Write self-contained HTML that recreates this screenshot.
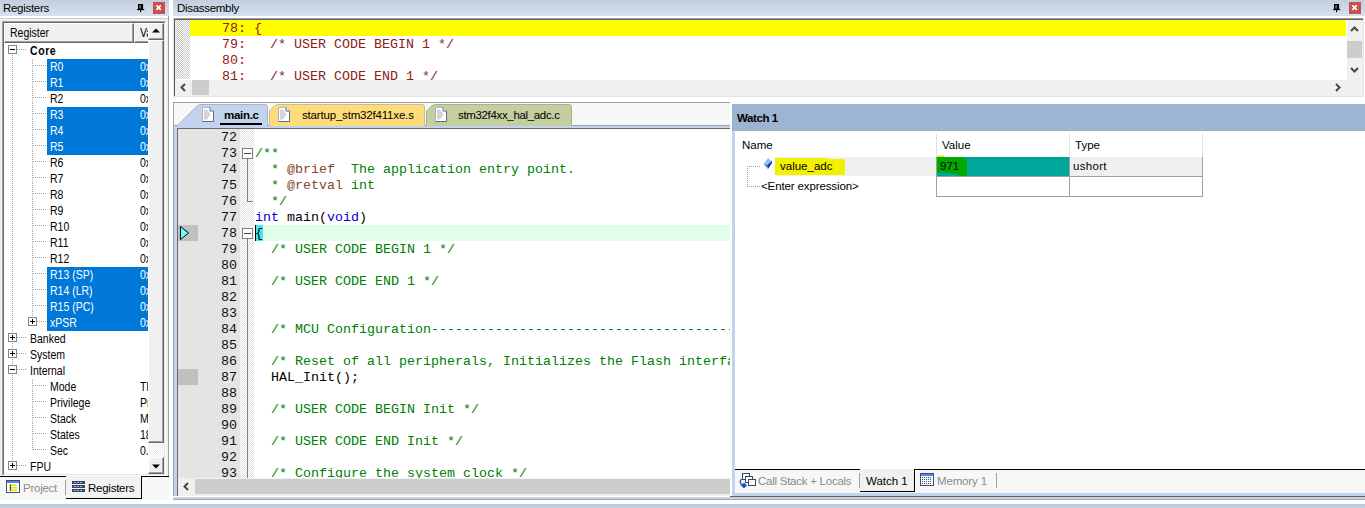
<!DOCTYPE html>
<html>
<head>
<meta charset="utf-8">
<title>Debug</title>
<style>
html,body{margin:0;padding:0;}
body{width:1365px;height:508px;position:relative;overflow:hidden;background:#fff;font-family:"Liberation Sans",sans-serif;font-size:12px;color:#000;}
.abs{position:absolute;}
div,span{box-sizing:border-box;}
.ui{font-family:"Liberation Sans",sans-serif;font-size:12px;white-space:pre;}
.mono{font-family:"Liberation Mono",monospace;font-size:13.333px;white-space:pre;line-height:16px;}
.titlebar{background:linear-gradient(#c2cedd,#d6e2f0);height:16px;}
.closebtn{background:#c75050;width:12px;height:12px;}
.dither{background-image:conic-gradient(#fff 25%,#c8c8c8 0 50%,#fff 0 75%,#c8c8c8 0);background-size:2px 2px;}
.row{position:absolute;left:0;height:16px;line-height:16px;white-space:pre;font-size:12.5px;transform:scaleX(0.84);transform-origin:0 0;}
.sel{position:absolute;left:47px;width:101px;height:16px;background:#0078d7;}
.dotv{position:absolute;width:1px;background-image:linear-gradient(#a0a0a0 50%,transparent 0);background-size:1px 2px;}
.doth{position:absolute;height:1px;background-image:linear-gradient(90deg,#a0a0a0 50%,transparent 0);background-size:2px 1px;}
.box{position:absolute;width:9px;height:9px;border:1px solid #848484;background:#fff;}
.box i{position:absolute;left:1px;top:3px;width:5px;height:1px;background:#000;}
.box b{position:absolute;left:3px;top:1px;width:1px;height:5px;background:#000;}
.ln{position:absolute;left:0;margin-top:1px;width:59px;text-align:right;color:#101010;}
.code{position:absolute;left:77px;margin-top:1px;}
.dither3{background-image:conic-gradient(#fff 25%,#ececec 0 50%,#fff 0 75%,#ececec 0);background-size:2px 2px;}
.dither2{background-image:conic-gradient(#fff 25%,#e4e4e4 0 50%,#fff 0 75%,#e4e4e4 0);background-size:2px 2px;}
.fbox{position:absolute;width:11px;height:11px;border:1px solid #808080;background:#fff;}
.fbox i{position:absolute;left:1px;top:4px;width:7px;height:1px;background:#404040;}
.g{color:#008000;}
.k{color:#0000e0;}
.d{color:#84492c;}
.dis{position:absolute;left:221px;color:#8b2500;}
</style>
</head>
<body>

<!-- ================= REGISTERS PANEL ================= -->
<div class="abs" style="left:0;top:0;width:169px;height:504px;background:#f0f0f0;border-right:1px solid #a0a0a0;"></div>
<div class="abs titlebar" style="left:0;top:0;width:169px;"></div>
<div class="abs ui" style="left:3px;top:1px;line-height:15px;font-size:11.5px;letter-spacing:-0.3px;">Registers</div>
<!-- pin -->
<svg class="abs" style="left:137px;top:4px;" width="8" height="9" viewBox="0 0 8 9"><path d="M1 0H6.100V5H1Z M2.600 1.200V4.500H3.500V1.200Z" fill="#000" fill-rule="evenodd"/><rect x="0" y="5" width="7.200" height="1.100" fill="#000"/><rect x="3" y="6" width="1.100" height="2.200" fill="#000"/></svg>
<div class="abs closebtn" style="left:153px;top:2px;"></div>
<svg class="abs" style="left:153px;top:2px;" width="13" height="13" viewBox="0 0 13 13"><path d="M3.400 3.400l4.400 4.400M7.800 3.400l-4.400 4.400" stroke="#fff" stroke-width="1.700" fill="none"/></svg>

<!-- list frame -->
<div class="abs" style="left:0;top:16px;width:168px;height:2px;background:#fff;"></div>
<div class="abs" style="left:0;top:18px;width:168px;height:1px;background:#cfcfcf;"></div>
<div class="abs" style="left:2px;top:21px;width:164px;height:455px;border:1px solid #a0a0a0;border-right-color:#fff;border-bottom-color:#fff;background:#fff;"></div>
<div class="abs" style="left:3px;top:22px;width:162px;height:453px;border:1px solid #696969;border-right-color:#e3e3e3;border-bottom-color:#e3e3e3;background:#fff;"></div>
<!-- header -->
<div class="abs" style="left:4px;top:23px;width:130px;height:20px;background:#f0f0f0;border:1px solid #fff;border-right-color:#696969;border-bottom-color:#696969;box-shadow:inset -1px -1px 0 #a0a0a0;"></div>
<div class="abs" style="left:134px;top:23px;width:30px;height:20px;background:#f0f0f0;border:1px solid #fff;border-right-color:#696969;border-bottom-color:#696969;box-shadow:inset -1px -1px 0 #a0a0a0;"></div>
<div class="abs ui" style="left:10px;top:25px;line-height:16px;font-size:12.5px;transform:scaleX(0.84);transform-origin:0 0;">Register</div>
<div class="abs ui" style="left:140px;top:25px;line-height:16px;width:8px;overflow:hidden;"><span style="display:inline-block;font-size:12.5px;transform:scaleX(0.84);transform-origin:0 0;">Va</span></div>

<!-- tree area -->
<div class="abs" id="tree" style="left:0;top:43px;width:148px;height:431px;overflow:hidden;">
  <!-- selections -->
  <div class="sel" style="top:16px;height:32px;"></div>
  <div class="sel" style="top:64px;height:48px;"></div>
  <div class="sel" style="top:224px;height:64px;"></div>
  <!-- dotted lines -->
  <div class="dotv" style="left:12px;top:12px;height:412px;"></div>
  <div class="dotv" style="left:32px;top:16px;height:264px;"></div>
  <div class="dotv" style="left:32px;top:336px;height:72px;"></div>
  <div class="doth" style="left:17px;top:6px;width:10px;"></div>
  <div class="box" style="left:8px;top:2px;"><i></i></div>
  <div class="row" style="left:30px;top:0px;color:#000;font-weight:bold;letter-spacing:0.7px;">Core</div>
  <div class="doth" style="left:33px;top:22px;width:14px;"></div>
  <div class="row" style="left:50px;top:16px;color:#fff;">R0</div>
  <div class="row" style="left:140px;top:16px;color:#fff;">0x</div>
  <div class="doth" style="left:33px;top:38px;width:14px;"></div>
  <div class="row" style="left:50px;top:32px;color:#fff;">R1</div>
  <div class="row" style="left:140px;top:32px;color:#fff;">0x</div>
  <div class="doth" style="left:33px;top:54px;width:14px;"></div>
  <div class="row" style="left:50px;top:48px;color:#000;">R2</div>
  <div class="row" style="left:140px;top:48px;color:#000;">0x</div>
  <div class="doth" style="left:33px;top:70px;width:14px;"></div>
  <div class="row" style="left:50px;top:64px;color:#fff;">R3</div>
  <div class="row" style="left:140px;top:64px;color:#fff;">0x</div>
  <div class="doth" style="left:33px;top:86px;width:14px;"></div>
  <div class="row" style="left:50px;top:80px;color:#fff;">R4</div>
  <div class="row" style="left:140px;top:80px;color:#fff;">0x</div>
  <div class="doth" style="left:33px;top:102px;width:14px;"></div>
  <div class="row" style="left:50px;top:96px;color:#fff;">R5</div>
  <div class="row" style="left:140px;top:96px;color:#fff;">0x</div>
  <div class="doth" style="left:33px;top:118px;width:14px;"></div>
  <div class="row" style="left:50px;top:112px;color:#000;">R6</div>
  <div class="row" style="left:140px;top:112px;color:#000;">0x</div>
  <div class="doth" style="left:33px;top:134px;width:14px;"></div>
  <div class="row" style="left:50px;top:128px;color:#000;">R7</div>
  <div class="row" style="left:140px;top:128px;color:#000;">0x</div>
  <div class="doth" style="left:33px;top:150px;width:14px;"></div>
  <div class="row" style="left:50px;top:144px;color:#000;">R8</div>
  <div class="row" style="left:140px;top:144px;color:#000;">0x</div>
  <div class="doth" style="left:33px;top:166px;width:14px;"></div>
  <div class="row" style="left:50px;top:160px;color:#000;">R9</div>
  <div class="row" style="left:140px;top:160px;color:#000;">0x</div>
  <div class="doth" style="left:33px;top:182px;width:14px;"></div>
  <div class="row" style="left:50px;top:176px;color:#000;">R10</div>
  <div class="row" style="left:140px;top:176px;color:#000;">0x</div>
  <div class="doth" style="left:33px;top:198px;width:14px;"></div>
  <div class="row" style="left:50px;top:192px;color:#000;">R11</div>
  <div class="row" style="left:140px;top:192px;color:#000;">0x</div>
  <div class="doth" style="left:33px;top:214px;width:14px;"></div>
  <div class="row" style="left:50px;top:208px;color:#000;">R12</div>
  <div class="row" style="left:140px;top:208px;color:#000;">0x</div>
  <div class="doth" style="left:33px;top:230px;width:14px;"></div>
  <div class="row" style="left:50px;top:224px;color:#fff;">R13 (SP)</div>
  <div class="row" style="left:140px;top:224px;color:#fff;">0x</div>
  <div class="doth" style="left:33px;top:246px;width:14px;"></div>
  <div class="row" style="left:50px;top:240px;color:#fff;">R14 (LR)</div>
  <div class="row" style="left:140px;top:240px;color:#fff;">0x</div>
  <div class="doth" style="left:33px;top:262px;width:14px;"></div>
  <div class="row" style="left:50px;top:256px;color:#fff;">R15 (PC)</div>
  <div class="row" style="left:140px;top:256px;color:#fff;">0x</div>
  <div class="doth" style="left:37px;top:278px;width:10px;"></div>
  <div class="box" style="left:28px;top:274px;"><i></i><b></b></div>
  <div class="row" style="left:50px;top:272px;color:#fff;">xPSR</div>
  <div class="row" style="left:140px;top:272px;color:#fff;">0x</div>
  <div class="doth" style="left:17px;top:294px;width:10px;"></div>
  <div class="box" style="left:8px;top:290px;"><i></i><b></b></div>
  <div class="row" style="left:30px;top:288px;color:#000;">Banked</div>
  <div class="doth" style="left:17px;top:310px;width:10px;"></div>
  <div class="box" style="left:8px;top:306px;"><i></i><b></b></div>
  <div class="row" style="left:30px;top:304px;color:#000;">System</div>
  <div class="doth" style="left:17px;top:326px;width:10px;"></div>
  <div class="box" style="left:8px;top:322px;"><i></i></div>
  <div class="row" style="left:30px;top:320px;color:#000;">Internal</div>
  <div class="doth" style="left:33px;top:342px;width:14px;"></div>
  <div class="row" style="left:50px;top:336px;color:#000;">Mode</div>
  <div class="row" style="left:140px;top:336px;color:#000;">Th</div>
  <div class="doth" style="left:33px;top:358px;width:14px;"></div>
  <div class="row" style="left:50px;top:352px;color:#000;">Privilege</div>
  <div class="row" style="left:140px;top:352px;color:#000;">Pr</div>
  <div class="doth" style="left:33px;top:374px;width:14px;"></div>
  <div class="row" style="left:50px;top:368px;color:#000;">Stack</div>
  <div class="row" style="left:140px;top:368px;color:#000;">M</div>
  <div class="doth" style="left:33px;top:390px;width:14px;"></div>
  <div class="row" style="left:50px;top:384px;color:#000;">States</div>
  <div class="row" style="left:140px;top:384px;color:#000;">18</div>
  <div class="doth" style="left:33px;top:406px;width:14px;"></div>
  <div class="row" style="left:50px;top:400px;color:#000;">Sec</div>
  <div class="row" style="left:140px;top:400px;color:#000;">0.</div>
  <div class="doth" style="left:17px;top:422px;width:10px;"></div>
  <div class="box" style="left:8px;top:418px;"><i></i><b></b></div>
  <div class="row" style="left:30px;top:416px;color:#000;">FPU</div>

</div>

<!-- scrollbar -->
<div class="abs dither3" style="left:148px;top:23px;width:16px;height:451px;"></div>
<div class="abs" style="left:148px;top:23px;width:16px;height:17px;background:#f0f0f0;border:1px solid #fff;border-right-color:#696969;border-bottom-color:#696969;box-shadow:inset -1px -1px 0 #a0a0a0;"></div>
<svg class="abs" style="left:152px;top:28px;" width="8" height="5"><path d="M0 4.500L4 0.500L8 4.500z" fill="#000"/></svg>
<div class="abs" style="left:148px;top:40px;width:16px;height:403px;background:#f0f0f0;border:1px solid #fff;border-right-color:#696969;border-bottom-color:#696969;box-shadow:inset -1px -1px 0 #a0a0a0;"></div>
<div class="abs" style="left:148px;top:457px;width:16px;height:17px;background:#f0f0f0;border:1px solid #fff;border-right-color:#696969;border-bottom-color:#696969;box-shadow:inset -1px -1px 0 #a0a0a0;"></div>
<svg class="abs" style="left:152px;top:464px;" width="8" height="5"><path d="M0 0.500L4 4.500L8 0.500z" fill="#000"/></svg>

<!-- bottom tabs -->
<div class="abs" style="left:0;top:500px;width:173px;height:4px;background:#fff;"></div>
<div class="abs" style="left:0;top:476px;width:169px;height:24px;background:#f7f7f7;"></div>
<div class="abs" style="left:141px;top:476px;width:28px;height:1px;background:#000;"></div>
<div class="abs" style="left:0;top:476px;width:66px;height:1px;background:#000;"></div>
<div class="abs" style="left:66px;top:476px;width:76px;height:23px;background:#f2f2f2;border-right:1px solid #000;border-bottom:1px solid #000;"></div>
<div class="abs ui" id="t_proj" style="left:23px;top:480px;line-height:16px;font-size:11.5px;letter-spacing:-0.25px;color:#8a8a8a;">Project</div>
<div class="abs ui" id="t_regs" style="left:88px;top:480px;line-height:16px;font-size:11.5px;letter-spacing:-0.25px;">Registers</div>
<div class="abs" style="left:65px;top:480px;width:1px;height:15px;background:#a0a0a0;"></div>
<!-- project icon -->
<svg class="abs" style="left:6px;top:480px;" width="14" height="13" viewBox="0 0 14 13"><rect x="0.5" y="0.5" width="13" height="12" fill="#fff" stroke="#3c4f78"/><rect x="1" y="1" width="12" height="2" fill="#4f86e8"/><rect x="3" y="4.5" width="8" height="1.500" fill="#d8e600"/><rect x="3" y="7" width="8" height="1.500" fill="#d8e600"/><rect x="3" y="9.500" width="8" height="1.500" fill="#d8e600"/><rect x="4" y="4.500" width="1" height="6.500" fill="#4a4a30"/></svg>
<!-- registers icon -->
<svg class="abs" style="left:72px;top:481px;" width="13" height="11" viewBox="0 0 13 11"><g fill="#34466a"><rect x="0" y="0" width="13" height="3"/><rect x="0" y="4" width="13" height="3"/><rect x="0" y="8" width="13" height="3"/></g><g fill="#9fb4d8"><rect x="2" y="1" width="2" height="1"/><rect x="5" y="1" width="2" height="1"/><rect x="8" y="1" width="2" height="1"/><rect x="2" y="5" width="2" height="1"/><rect x="5" y="5" width="2" height="1"/><rect x="8" y="5" width="2" height="1"/><rect x="2" y="9" width="2" height="1"/><rect x="5" y="9" width="2" height="1"/><rect x="8" y="9" width="2" height="1"/></g></svg>

<!-- ================= DISASSEMBLY ================= -->
<div class="abs titlebar" style="left:173px;top:0;width:1192px;"></div>
<div class="abs ui" style="left:177px;top:1px;line-height:15px;font-size:11.5px;letter-spacing:-0.3px;">Disassembly</div>
<svg class="abs" style="left:1333px;top:4px;" width="8" height="9" viewBox="0 0 8 9"><path d="M1 0H6.100V5H1Z M2.600 1.200V4.500H3.500V1.200Z" fill="#000" fill-rule="evenodd"/><rect x="0" y="5" width="7.200" height="1.100" fill="#000"/><rect x="3" y="6" width="1.100" height="2.200" fill="#000"/></svg>
<div class="abs closebtn" style="left:1349px;top:2px;"></div>
<svg class="abs" style="left:1349px;top:2px;" width="13" height="13" viewBox="0 0 13 13"><path d="M3.400 3.400l4.400 4.400M7.800 3.400l-4.400 4.400" stroke="#fff" stroke-width="1.700" fill="none"/></svg>

<div class="abs" style="left:173px;top:16px;width:1192px;height:81px;background:#fff;"></div>
<div class="abs" style="left:173px;top:18px;width:1192px;height:79px;border:1px solid #a0a0a0;border-right:none;border-bottom-color:#e3e3e3;border-left-color:#e3e3e3;background:#fff;"></div>
<div class="abs" style="left:174px;top:19px;width:1191px;height:77px;border-left:1px solid #606060;border-top:1px solid #606060;"></div>
<div class="abs dither" style="left:175px;top:20px;width:15px;height:59px;"></div>
<div class="abs" style="left:190px;top:20px;width:1156px;height:16px;background:#ffff00;"></div>
<div class="abs" style="left:175px;top:20px;width:1171px;height:60px;overflow:hidden;">
  <div class="mono" style="position:absolute;left:47px;top:1px;color:#8e2018;">78: {
79:   /* USER CODE BEGIN 1 */
80: 
81:   /* USER CODE END 1 */</div>
</div>
<!-- v scrollbar -->
<div class="abs" style="left:1347px;top:20px;width:17px;height:60px;background:#f0f0f0;"></div>
<div class="abs" style="left:1347px;top:41px;width:15px;height:17px;background:#cdcdcd;"></div>
<svg class="abs" style="left:1350px;top:26px;" width="9" height="6"><path d="M1 5L4.5 1.5L8 5" stroke="#484848" stroke-width="2" fill="none"/></svg>
<svg class="abs" style="left:1350px;top:67px;" width="9" height="6"><path d="M1 1L4.5 4.5L8 1" stroke="#484848" stroke-width="2" fill="none"/></svg>
<!-- h scrollbar -->
<div class="abs" style="left:175px;top:80px;width:1190px;height:16px;background:#f0f0f0;"></div>
<div class="abs" style="left:192px;top:80px;width:17px;height:15px;background:#cdcdcd;"></div>
<svg class="abs" style="left:180px;top:83px;" width="6" height="9"><path d="M5 1L1.5 4.5L5 8" stroke="#484848" stroke-width="2" fill="none"/></svg>
<svg class="abs" style="left:1335px;top:83px;" width="6" height="9"><path d="M1 1L4.5 4.5L1 8" stroke="#484848" stroke-width="2" fill="none"/></svg>

<div class="abs" style="left:1363px;top:18px;width:1px;height:79px;background:#e3e3e3;"></div>
<div class="abs" style="left:1364px;top:16px;width:1px;height:88px;background:#fff;"></div>
<!-- ================= EDITOR ================= -->
<div class="abs" style="left:173px;top:102px;width:557px;height:398px;background:#c3d3ee;border:1px solid #a0a0a0;border-right:none;"></div>
<!-- tab strip -->
<div class="abs" style="left:174px;top:103px;width:556px;height:23px;background:#f7f7f7;"></div>
<div class="abs" style="left:174px;top:125px;width:556px;height:1px;background:#a0a0a0;"></div>
<!-- active tab main.c -->
<svg class="abs" style="left:174px;top:103px;" width="400" height="24" viewBox="0 0 400 24">
  <path d="M2.5 23.5 L22.5 3.5 Q24.5 1.5 27 1.5 L91 1.5 Q93.5 1.5 93.5 4 L93.5 23.5 Z" fill="#c3d3ee" stroke="#a8b4c8" stroke-width="1"/>
  <path d="M95.5 23.5 L95.5 8 L100 3.5 Q102 1.5 105 1.5 L248 1.5 Q250.500 1.5 250.500 4 L250.500 23.500 Z" fill="#ffdc7a" stroke="#c8bc98" stroke-width="1"/>
  <path d="M252.500 23.5 L252.500 8 L257 3.5 Q259 1.5 262 1.5 L395 1.5 Q397.500 1.5 397.500 4 L397.500 23.500 Z" fill="#c3cf9f" stroke="#a8b090" stroke-width="1"/>
</svg>
<div class="abs" style="left:174px;top:126px;width:556px;height:2px;background:#c3d3ee;"></div>
<!-- doc icons -->
<svg class="abs docico" style="left:202px;top:107px;" width="12" height="15" viewBox="0 0 12 15"><path d="M0.5 0.500H8L11.500 4V14.500H0.500Z" fill="#fff" stroke="#aab4c8"/><path d="M11.500 4V14.500H0.500" fill="none" stroke="#5a6c90"/><path d="M8 0.500V4H11.500" fill="#e8eef8" stroke="#5a6c90"/><path d="M2 2.500H5L8.500 7.500L5 12.500H2Z" fill="#d4d4d4"/></svg>
<svg class="abs docico" style="left:278px;top:107px;" width="12" height="15" viewBox="0 0 12 15"><path d="M0.5 0.500H8L11.500 4V14.500H0.500Z" fill="#fff" stroke="#aab4c8"/><path d="M11.500 4V14.500H0.500" fill="none" stroke="#5a6c90"/><path d="M8 0.500V4H11.500" fill="#e8eef8" stroke="#5a6c90"/><path d="M2 2.500H5L8.500 7.500L5 12.500H2Z" fill="#d4d4d4"/></svg>
<svg class="abs docico" style="left:435px;top:107px;" width="12" height="15" viewBox="0 0 12 15"><path d="M0.5 0.500H8L11.500 4V14.500H0.500Z" fill="#fff" stroke="#aab4c8"/><path d="M11.500 4V14.500H0.500" fill="none" stroke="#5a6c90"/><path d="M8 0.500V4H11.500" fill="#e8eef8" stroke="#5a6c90"/><path d="M2 2.500H5L8.500 7.500L5 12.500H2Z" fill="#d4d4d4"/></svg>
<div class="abs ui" id="t_main" style="left:224px;top:107px;line-height:16px;font-size:11.5px;font-weight:bold;letter-spacing:-0.3px;">main.c</div>
<div class="abs" style="left:220px;top:123px;width:42px;height:2px;background:#000;"></div>
<div class="abs ui" id="t_startup" style="left:302px;top:107px;line-height:16px;font-size:11.5px;letter-spacing:-0.18px;">startup_stm32f411xe.s</div>
<div class="abs ui" id="t_hal" style="left:458px;top:107px;line-height:16px;font-size:11.5px;letter-spacing:-0.34px;">stm32f4xx_hal_adc.c</div>
<!-- content frame -->
<div class="abs" style="left:177px;top:128px;width:553px;height:368px;border-left:1px solid #696969;border-top:1px solid #696969;background:#fff;"></div>
<div class="abs" id="edc" style="left:178px;top:129px;width:552px;height:349px;overflow:hidden;background:#fff;">
  <div class="abs" style="left:0;top:0;width:62px;height:349px;background:#e4e4e4;"></div>
  <div class="abs dither2" style="left:62px;top:0;width:14px;height:349px;"></div>
  <div class="abs" style="left:77px;top:96px;width:475px;height:16px;background:#e0ffe8;"></div>
  <div class="abs" style="left:77px;top:96px;width:8px;height:16px;background:#3fe9f0;border-left:1px solid #000;"></div>
  <div class="abs" style="left:0;top:96px;width:20px;height:16px;background:#c0c0c0;"></div>
  <div class="abs" style="left:0;top:240px;width:20px;height:16px;background:#c0c0c0;"></div>
  <svg class="abs" style="left:1px;top:96px;" width="12" height="16"><path d="M1.5 1.5L9.500 8L1.500 14.500Z" fill="#66ffff" stroke="#000" stroke-width="1"/></svg>
  <!-- fold -->
  <div class="abs" style="left:69px;top:30px;width:1px;height:43px;background:#808080;"></div>
  <div class="abs" style="left:69px;top:72px;width:6px;height:1px;background:#808080;"></div>
  <div class="abs" style="left:69px;top:109px;width:1px;height:240px;background:#808080;"></div>
  <div class="fbox" style="left:64px;top:19px;"><i></i></div>
  <div class="fbox" style="left:64px;top:99px;"><i></i></div>
  <div class="mono ln" style="top:0px;">72</div>
  <div class="mono ln" style="top:16px;">73</div>
  <div class="mono code" style="top:16px;"><span class="g">/**</span></div>
  <div class="mono ln" style="top:32px;">74</div>
  <div class="mono code" style="top:32px;"><span class="g">  * </span><span class="d">@brief</span><span class="g">  The application entry point.</span></div>
  <div class="mono ln" style="top:48px;">75</div>
  <div class="mono code" style="top:48px;"><span class="g">  * </span><span class="d">@retval</span><span class="g"> int</span></div>
  <div class="mono ln" style="top:64px;">76</div>
  <div class="mono code" style="top:64px;"><span class="g">  */</span></div>
  <div class="mono ln" style="top:80px;">77</div>
  <div class="mono code" style="top:80px;"><span class="k">int</span> main(<span class="k">void</span>)</div>
  <div class="mono ln" style="top:96px;">78</div>
  <div class="mono code" style="top:96px;">{</div>
  <div class="mono ln" style="top:112px;">79</div>
  <div class="mono code" style="top:112px;"><span class="g">  /* USER CODE BEGIN 1 */</span></div>
  <div class="mono ln" style="top:128px;">80</div>
  <div class="mono ln" style="top:144px;">81</div>
  <div class="mono code" style="top:144px;"><span class="g">  /* USER CODE END 1 */</span></div>
  <div class="mono ln" style="top:160px;">82</div>
  <div class="mono ln" style="top:176px;">83</div>
  <div class="mono ln" style="top:192px;">84</div>
  <div class="mono code" style="top:192px;"><span class="g">  /* MCU Configuration--------------------------------------------------------*/</span></div>
  <div class="mono ln" style="top:208px;">85</div>
  <div class="mono ln" style="top:224px;">86</div>
  <div class="mono code" style="top:224px;"><span class="g">  /* Reset of all peripherals, Initializes the Flash interface and the Systick. */</span></div>
  <div class="mono ln" style="top:240px;">87</div>
  <div class="mono code" style="top:240px;">  HAL_Init();</div>
  <div class="mono ln" style="top:256px;">88</div>
  <div class="mono ln" style="top:272px;">89</div>
  <div class="mono code" style="top:272px;"><span class="g">  /* USER CODE BEGIN Init */</span></div>
  <div class="mono ln" style="top:288px;">90</div>
  <div class="mono ln" style="top:304px;">91</div>
  <div class="mono code" style="top:304px;"><span class="g">  /* USER CODE END Init */</span></div>
  <div class="mono ln" style="top:320px;">92</div>
  <div class="mono ln" style="top:336px;">93</div>
  <div class="mono code" style="top:336px;"><span class="g">  /* Configure the system clock */</span></div>

</div>
<!-- editor h scrollbar -->
<div class="abs" style="left:178px;top:478px;width:552px;height:18px;background:#f0f0f0;"></div>
<div class="abs" style="left:195px;top:479px;width:535px;height:15px;background:#cdcdcd;"></div>
<svg class="abs" style="left:183px;top:482px;" width="6" height="9"><path d="M5 1L1.5 4.5L5 8" stroke="#484848" stroke-width="2" fill="none"/></svg>
<div class="abs" style="left:173px;top:496px;width:1192px;height:1px;background:#fff;"></div>
<div class="abs" style="left:173px;top:497px;width:1192px;height:2px;background:#c3d3ee;"></div>
<div class="abs" style="left:173px;top:499px;width:1192px;height:1px;background:#a8a8a8;"></div>

<!-- ================= WATCH ================= -->
<div class="abs" style="left:732px;top:104px;width:633px;height:392px;background:#c3d3ee;"></div>
<div class="abs" style="left:732px;top:104px;width:633px;height:27px;background:#9db5d2;"></div>
<div class="abs ui" id="t_w1" style="left:737px;top:110px;line-height:16px;font-size:11.5px;font-weight:bold;letter-spacing:-0.4px;">Watch 1</div>
<div class="abs" style="left:735px;top:131px;width:630px;height:338px;background:#fff;"></div>
<div class="abs" style="left:735px;top:130px;width:630px;height:1px;background:#b0b0b0;"></div>
<!-- header -->
<div class="abs ui" style="left:742px;top:137px;line-height:16px;font-size:11.5px;">Name</div>
<div class="abs ui" style="left:942px;top:137px;line-height:16px;font-size:11.5px;">Value</div>
<div class="abs ui" style="left:1075px;top:137px;line-height:16px;font-size:11.5px;">Type</div>
<div class="abs" style="left:936px;top:134px;width:1px;height:23px;background:#e0e0e0;"></div>
<div class="abs" style="left:1069px;top:134px;width:1px;height:23px;background:#e0e0e0;"></div>
<div class="abs" style="left:1202px;top:134px;width:1px;height:23px;background:#e0e0e0;"></div>
<!-- row 1 -->
<div class="abs" style="left:775px;top:157px;width:427px;height:19px;background:#f0f0f0;"></div>
<div class="abs" style="left:775px;top:158px;width:52px;height:17px;background:#f3f100;"></div><div class="abs" style="left:827px;top:159px;width:18px;height:16px;background:#f3f100;"></div>
<div class="abs" style="left:937px;top:157px;width:132px;height:19px;background:#00a59c;"></div>
<svg class="abs" style="left:934px;top:153px;" width="36" height="26" viewBox="0 0 36 26"><path d="M3 2.500L10 2L10 4L3 4Z" fill="#f4f400"/><path d="M26 22.500L33 22.500L33 24L27.500 24Z" fill="#e8e800"/><path d="M3 4L26 4Q33 4.500 33 9L33 23L26 23L23 21L3 19Z" fill="#00a800"/></svg>
<div class="abs ui" style="left:780px;top:158px;line-height:16px;font-size:11.5px;">value_adc</div>
<div class="abs ui" style="left:940px;top:158px;line-height:16px;font-size:11.5px;">971</div>
<div class="abs ui" style="left:1073px;top:158px;line-height:16px;font-size:11.5px;letter-spacing:0.3px;">ushort</div>
<div class="abs ui" style="left:761px;top:178px;line-height:16px;font-size:11.5px;letter-spacing:-0.12px;">&lt;Enter expression&gt;</div>
<!-- grid -->
<div class="abs" style="left:936px;top:157px;width:1px;height:40px;background:#a0a0a0;"></div>
<div class="abs" style="left:1069px;top:157px;width:1px;height:40px;background:#a0a0a0;"></div>
<div class="abs" style="left:1202px;top:157px;width:1px;height:40px;background:#a0a0a0;"></div>
<div class="abs" style="left:936px;top:176px;width:267px;height:1px;background:#a0a0a0;"></div>
<div class="abs" style="left:936px;top:196px;width:267px;height:1px;background:#a0a0a0;"></div>
<!-- tree dots + icon -->
<div class="dotv" style="left:747px;top:166px;height:21px;"></div>
<div class="doth" style="left:747px;top:166px;width:14px;"></div>
<div class="doth" style="left:747px;top:186px;width:14px;"></div>
<svg class="abs" style="left:763px;top:157px;" width="10" height="13" viewBox="0 0 10 13"><path d="M5 1L9 4L4 8L1 6.500Z" fill="#8fc2fa"/><path d="M9 4L9 6L5 12L4 8Z" fill="#1a3aa4"/><path d="M1 6.500L4 8L5 12L1.500 8Z" fill="#3f7de0"/></svg>
<!-- bottom tabs -->
<div class="abs" style="left:735px;top:469px;width:630px;height:24px;background:#f7f7f7;"></div>
<div class="abs" style="left:735px;top:469px;width:125px;height:1px;background:#000;"></div>
<div class="abs" style="left:914px;top:469px;width:451px;height:1px;background:#000;"></div>
<div class="abs" style="left:860px;top:469px;width:55px;height:23px;background:#f0f0f0;border-right:1px solid #000;border-bottom:1px solid #000;"></div>
<div class="abs ui" style="left:758px;top:473px;line-height:16px;font-size:11.5px;letter-spacing:-0.25px;color:#8a8a8a;">Call Stack + Locals</div>
<div class="abs ui" style="left:866px;top:473px;line-height:16px;font-size:11.5px;">Watch 1</div>
<div class="abs ui" style="left:937px;top:473px;line-height:16px;font-size:11.5px;letter-spacing:-0.15px;color:#8a8a8a;">Memory 1</div>
<!-- call stack icon -->
<svg class="abs" style="left:739px;top:472px;" width="18" height="17" viewBox="0 0 18 17"><g fill="#fdfdff" stroke="#34466a" stroke-width="1"><rect x="3.5" y="1.500" width="7" height="6"/><rect x="6.500" y="4.500" width="7" height="6"/><rect x="9.500" y="7.500" width="7" height="6"/></g><path d="M2.500 7C0.500 9 1 12 3.500 13.500" stroke="#2a5fd0" stroke-width="1.600" fill="none"/><path d="M2 13.500L5 10.500L8 13.500L5 16.500Z" fill="#2050c8"/></svg>
<!-- memory icon -->
<svg class="abs" style="left:920px;top:473px;" width="14" height="13" viewBox="0 0 14 13"><rect x="0.500" y="0.500" width="13" height="12" fill="#f4f7fc" stroke="#3c4f78"/><rect x="1" y="1" width="12" height="2" fill="#4f86e8"/><g fill="#505868"><rect x="2" y="4" width="1" height="1"/><rect x="4" y="4" width="1" height="1"/><rect x="6" y="4" width="1" height="1"/><rect x="8" y="4" width="1" height="1"/><rect x="10" y="4" width="1" height="1"/><rect x="2" y="6" width="1" height="1"/><rect x="4" y="6" width="1" height="1"/><rect x="6" y="6" width="1" height="1"/><rect x="8" y="6" width="1" height="1"/><rect x="10" y="6" width="1" height="1"/><rect x="2" y="8" width="1" height="1"/><rect x="4" y="8" width="1" height="1"/><rect x="6" y="8" width="1" height="1"/><rect x="8" y="8" width="1" height="1"/><rect x="10" y="8" width="1" height="1"/><rect x="2" y="10" width="1" height="1"/><rect x="4" y="10" width="1" height="1"/><rect x="6" y="10" width="1" height="1"/><rect x="8" y="10" width="1" height="1"/><rect x="10" y="10" width="1" height="1"/></g></svg>
<div class="abs" style="left:859px;top:473px;width:1px;height:15px;background:#a0a0a0;"></div>
<div class="abs" style="left:996px;top:473px;width:1px;height:15px;background:#a0a0a0;"></div>
<div class="abs" style="left:730px;top:496px;width:635px;height:1px;background:#606060;"></div>

<!-- bottom strip -->
<div class="abs" style="left:0;top:504px;width:1365px;height:4px;background:linear-gradient(#b9c8d9,#c6d2df);"></div>

</body>
</html>
